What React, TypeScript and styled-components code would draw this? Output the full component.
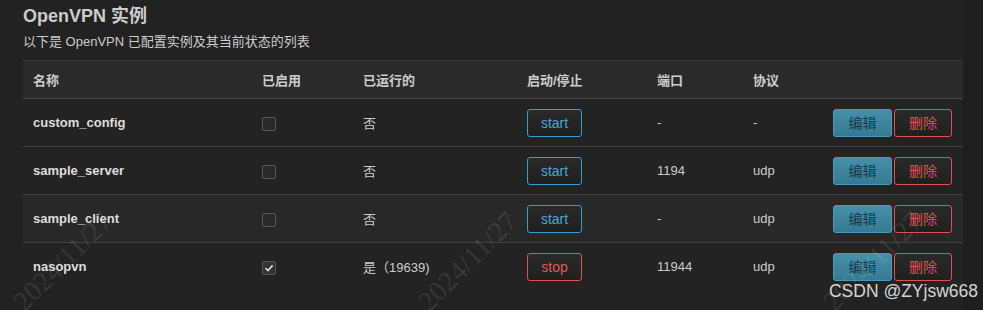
import React from 'react';
import styled, { createGlobalStyle } from 'styled-components';

const GlobalStyle = createGlobalStyle`
  html, body {
    margin: 0;
    padding: 0;
    background: #1e1e1e;
  }
  body {
    font-family: "Liberation Sans", Arial, "Noto Sans CJK SC", sans-serif;
    color: #ccc;
  }
`;

type Instance = {
  name: string;
  enabled: boolean;
  running: string;
  started: boolean;
  port: string;
  proto: string;
};

const instances: Instance[] = [
  { name: 'custom_config', enabled: false, running: '否', started: false, port: '-', proto: '-' },
  { name: 'sample_server', enabled: false, running: '否', started: false, port: '1194', proto: 'udp' },
  { name: 'sample_client', enabled: false, running: '否', started: false, port: '-', proto: 'udp' },
  { name: 'nasopvn', enabled: true, running: '是（19639)', started: true, port: '11944', proto: 'udp' },
];

export default function App() {
  return (
    <Shell>
      <GlobalStyle />
      <Content>
        <Title>OpenVPN 实例</Title>
        <Description>以下是 OpenVPN 已配置实例及其当前状态的列表</Description>
        <Table>
          <colgroup>
            <col style={{ width: 229 }} />
            <col style={{ width: 101 }} />
            <col style={{ width: 164 }} />
            <col style={{ width: 130 }} />
            <col style={{ width: 96 }} />
            <col style={{ width: 80 }} />
            <col />
          </colgroup>
          <thead>
            <HeadRow>
              <Th>名称</Th>
              <Th>已启用</Th>
              <Th>已运行的</Th>
              <Th>启动/停止</Th>
              <Th>端口</Th>
              <Th>协议</Th>
              <Th />
            </HeadRow>
          </thead>
          <tbody>
            {instances.map((it, i) => (
              <Row key={it.name} $alt={i === 2}>
                <NameCell>{it.name}</NameCell>
                <Td>
                  <Check $checked={it.enabled}>
                    {it.enabled && (
                      <svg width="10" height="10" viewBox="0 0 10 10">
                        <path d="M1.5 5.2 L4 7.6 L8.6 2.4" fill="none" stroke="#ddd" strokeWidth="1.6" />
                      </svg>
                    )}
                  </Check>
                </Td>
                <Td>{it.running}</Td>
                <Td>
                  <ToggleButton $stop={it.started}>{it.started ? 'stop' : 'start'}</ToggleButton>
                </Td>
                <Td>{it.port}</Td>
                <Td>{it.proto}</Td>
                <ActionCell>
                  <EditButton>编辑</EditButton>
                  <DeleteButton>删除</DeleteButton>
                </ActionCell>
              </Row>
            ))}
          </tbody>
        </Table>
      </Content>
      <Stamp $left={28}>2024/11/27</Stamp>
      <Stamp $left={433}>2024/11/27</Stamp>
      <Stamp $left={838}>2024/11/27</Stamp>
      <Credit>CSDN @ZYjsw668</Credit>
    </Shell>
  );
}

const Shell = styled.div`
  position: relative;
  width: 983px;
  height: 310px;
  overflow: hidden;
  background: #1e1e1e;
`;

const Content = styled.main`
  width: 940px;
  height: 310px;
  padding: 0 0 0 23px;
  background: #222;
`;

const Title = styled.h2`
  margin: 0;
  padding-top: 5px;
  font-size: 18px;
  line-height: 22px;
  font-weight: bold;
  color: #ccc;
`;

const Description = styled.p`
  margin: 6px 0 0;
  font-size: 13px;
  line-height: 18px;
  color: #ccc;
`;

const Table = styled.table`
  margin-top: 9px;
  width: 940px;
  border-collapse: collapse;
  table-layout: fixed;
  font-size: 13px;
`;

const HeadRow = styled.tr`
  background: #2a2a2a;
  border-top: 1px solid #3a3a3a;
  border-bottom: 1px solid #444;
  height: 38px;
`;

const Th = styled.th`
  text-align: left;
  font-weight: bold;
  padding: 0 10px;
  color: #ccc;
`;

const Row = styled.tr<{ $alt: boolean }>`
  height: 48px;
  background: ${p => (p.$alt ? '#282828' : '#232323')};
  border-bottom: 1px solid #404040;
  &:last-child {
    border-bottom: none;
  }
`;

const Td = styled.td`
  padding: 0 10px;
  color: #ccc;
  white-space: nowrap;
`;

const NameCell = styled(Td)`
  font-weight: bold;
  color: #ddd;
`;

const ActionCell = styled(Td)`
  text-align: right;
  font-size: 0;
  padding-right: 11px;
  & > * + * {
    margin-left: 2px;
  }
`;

const Check = styled.span<{ $checked: boolean }>`
  display: inline-flex;
  align-items: center;
  justify-content: center;
  box-sizing: border-box;
  width: 14px;
  height: 14px;
  margin-top: 2px;
  vertical-align: middle;
  border: 1px solid #555;
  border-radius: 2px;
  background: ${p => (p.$checked ? '#333' : '#2a2a2a')};
`;

const BaseButton = styled.button`
  box-sizing: border-box;
  height: 28px;
  padding: 0;
  border-radius: 3px;
  font-family: inherit;
  font-size: 14px;
  line-height: 26px;
  cursor: pointer;
  vertical-align: middle;
`;

const ToggleButton = styled(BaseButton)<{ $stop: boolean }>`
  width: 55px;
  border: 1px solid ${p => (p.$stop ? '#d9534f' : '#3d9cc7')};
  color: ${p => (p.$stop ? '#e05a55' : '#4aa6d4')};
  background: linear-gradient(#2a2a2a, #1f1f1f);
`;

const EditButton = styled(BaseButton)`
  width: 59px;
  border: 1px solid #4a9ab6;
  color: #1d3945;
  background: linear-gradient(#4490aa, #367a92);
`;

const DeleteButton = styled(BaseButton)`
  width: 58px;
  border: 1px solid #d9534f;
  color: #e0504c;
  background: linear-gradient(#2a2a2a, #1f1f1f);
`;

const Stamp = styled.span<{ $left: number }>`
  position: absolute;
  left: ${p => p.$left}px;
  bottom: -6px;
  font-family: "Liberation Serif", serif;
  font-size: 28px;
  line-height: 28px;
  color: rgba(255, 255, 255, 0.1);
  transform: rotate(-45deg);
  transform-origin: left bottom;
  white-space: nowrap;
  pointer-events: none;
`;

const Credit = styled.span`
  position: absolute;
  right: 5px;
  bottom: 9px;
  font-size: 17.5px;
  line-height: 20px;
  color: rgba(235, 235, 235, 0.9);
  pointer-events: none;
`;
